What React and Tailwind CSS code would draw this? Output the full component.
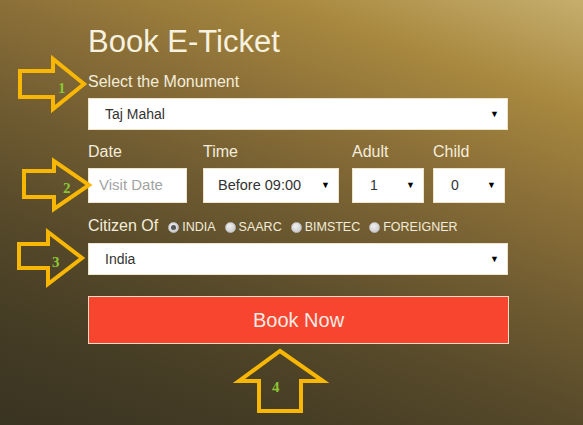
import React from "react";

const font = { fontFamily: '"Liberation Sans", Arial, sans-serif' };

const Caret = () => <span className="text-[9px] leading-none text-black">▼</span>;

const SelectBox = ({ value, className = "" }) => (
  <div
    className={`flex items-center justify-between bg-white border border-[#efe5cc] text-[14px] text-[#333] pl-4 pr-2 ${className}`}
  >
    <span>{value}</span>
    <Caret />
  </div>
);

const Radio = ({ label, checked }) => (
  <div className="flex items-center gap-[3px]">
    <span className="flex items-center justify-center w-[11px] h-[11px] rounded-full bg-[radial-gradient(circle_at_40%_35%,#f0f0f0,#c4c4c4)] border border-[#bdbdbd]">
      {checked && <span className="w-[5px] h-[5px] rounded-full bg-[#555]" />}
    </span>
    <span className="text-[12.5px] leading-none text-[#f2ecda]">{label}</span>
  </div>
);

const Arrows = () => (
  <svg className="absolute inset-0 pointer-events-none" width="583" height="425" viewBox="0 0 583 425">
    <g fill="none" stroke="#f8b705" strokeWidth="4" strokeLinejoin="miter">
      <polygon points="20,71 53,71 53,59 84,84 53,109 53,97 20,97" />
      <polygon points="24,171 54,171 54,161 89,185 54,209 54,197 24,197" />
      <polygon points="19,244 48,244 48,232 82,258 48,284 48,268 19,268" />
      <polygon points="280,351 323,381 301,381 301,411 259,411 259,381 239,381" />
    </g>
    <g fill="#8dc634" fontFamily='"Liberation Serif", serif' fontWeight="bold" fontSize="15">
      <text x="58" y="93">1</text>
      <text x="63" y="193">2</text>
      <text x="52" y="267">3</text>
      <text x="272" y="392">4</text>
    </g>
  </svg>
);

export default function App() {
  return (
    <div
      className="relative w-[583px] h-[425px] overflow-hidden bg-[linear-gradient(200deg,#c6ae6e_0%,#a9893f_17%,#8c7038_33%,#6f5b31_50%,#574a2a_66%,#463d25_82%,#393321_100%)]"
      style={font}
    >
      <div className="pl-[88px] pt-[26px] w-[508px] box-content">
        <h1 className="text-[31px] leading-none text-[#f7f1df]">Book E-Ticket</h1>

        <p className="mt-[17px] text-[16px] leading-none text-[#f4eddb]">Select the Monument</p>
        <SelectBox value="Taj Mahal" className="mt-[8px] w-[420px] h-[32px]" />

        <div className="mt-[14px] flex">
          <div className="w-[99px] mr-[16px]">
            <p className="text-[16px] leading-none text-[#f4eddb]">Date</p>
            <div className="mt-[8px] h-[35px] flex items-center bg-white border border-[#efe5cc] pl-[10px] text-[15px] text-[#a3a3a3]">
              Visit Date
            </div>
          </div>
          <div className="w-[136px] mr-[13px]">
            <p className="text-[16px] leading-none text-[#f4eddb]">Time</p>
            <SelectBox value="Before 09:00" className="mt-[8px] h-[35px] !text-[14.5px] !pl-[14px]" />
          </div>
          <div className="w-[72px] mr-[9px]">
            <p className="text-[16px] leading-none text-[#f4eddb]">Adult</p>
            <SelectBox value="1" className="mt-[8px] h-[35px] !pl-[17px]" />
          </div>
          <div className="w-[72px]">
            <p className="text-[16px] leading-none text-[#f4eddb]">Child</p>
            <SelectBox value="0" className="mt-[8px] h-[35px] !pl-[17px]" />
          </div>
        </div>

        <div className="mt-[15px] flex items-center h-[16px]">
          <p className="text-[16px] leading-none text-[#f4eddb] mr-[10px]">Citizen Of</p>
          <div className="flex items-center gap-[9px] mt-[3px]">
            <Radio label="INDIA" checked />
            <Radio label="SAARC" />
            <Radio label="BIMSTEC" />
            <Radio label="FOREIGNER" />
          </div>
        </div>
        <SelectBox value="India" className="mt-[9px] w-[420px] h-[32px]" />

        <button className="mt-[21px] w-[421px] h-[48px] bg-[#f7452f] border border-[#f6dcc0] text-[20px] text-[#f8ebe4] flex items-center justify-center">
          Book Now
        </button>
      </div>
      <Arrows />
    </div>
  );
}
